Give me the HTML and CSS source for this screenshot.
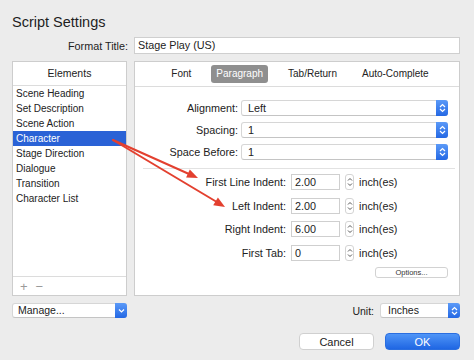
FILE: index.html
```html
<!DOCTYPE html>
<html lang="en">
<head>
    <meta charset="UTF-8">
    <meta name="viewport" content="width=device-width, initial-scale=1.0">
    <title>Script Settings</title>
    <link rel="stylesheet" href="styles.css">
</head>
<body>

    <div class="window">
        <div class="title">Script Settings</div>

        <div class="format-row">
            <label class="format-label">Format Title:</label>
            <div class="text-field wide">Stage Play (US)</div>
        </div>

        <div class="main">
            <div class="elements">
                <div class="elements-header">Elements</div>
                <div class="item">Scene Heading</div>
                <div class="item">Set Description</div>
                <div class="item">Scene Action</div>
                <div class="item selected">Character</div>
                <div class="item">Stage Direction</div>
                <div class="item">Dialogue</div>
                <div class="item">Transition</div>
                <div class="item">Character List</div>
                <div class="spacer"></div>
                <div class="elements-footer">
                    <span class="plus">+</span>
                    <span class="minus">&minus;</span>
                </div>
            </div>

            <div class="panel">
                <div class="tabbar">
                    <span class="tab">Font</span>
                    <span class="tab active">Paragraph</span>
                    <span class="tab">Tab/Return</span>
                    <span class="tab">Auto-Complete</span>
                </div>

                <div class="popup-rows">
                    <label class="row-label">Alignment:</label>
                    <div class="popup"><span>Left</span><span class="popup-btn"><svg width="7" height="10" viewBox="0 0 7 10"><path d="M1 4 L3.5 1.5 L6 4 M1 6 L3.5 8.5 L6 6" fill="none" stroke="#fff" stroke-width="1.2"/></svg></span></div>
                    <label class="row-label">Spacing:</label>
                    <div class="popup"><span>1</span><span class="popup-btn"><svg width="7" height="10" viewBox="0 0 7 10"><path d="M1 4 L3.5 1.5 L6 4 M1 6 L3.5 8.5 L6 6" fill="none" stroke="#fff" stroke-width="1.2"/></svg></span></div>
                    <label class="row-label">Space Before:</label>
                    <div class="popup"><span>1</span><span class="popup-btn"><svg width="7" height="10" viewBox="0 0 7 10"><path d="M1 4 L3.5 1.5 L6 4 M1 6 L3.5 8.5 L6 6" fill="none" stroke="#fff" stroke-width="1.2"/></svg></span></div>
                </div>

                <div class="separator"></div>

                <div class="indent-rows">
                    <label class="row-label">First Line Indent:</label>
                    <div class="text-field num">2.00</div>
                    <span class="stepper"><svg width="6" height="12" viewBox="0 0 6 12"><path d="M1 4.5 L3 2.5 L5 4.5 M1 7.5 L3 9.5 L5 7.5" fill="none" stroke="#555" stroke-width="1"/></svg></span>
                    <span class="unit-text">inch(es)</span>

                    <label class="row-label">Left Indent:</label>
                    <div class="text-field num">2.00</div>
                    <span class="stepper"><svg width="6" height="12" viewBox="0 0 6 12"><path d="M1 4.5 L3 2.5 L5 4.5 M1 7.5 L3 9.5 L5 7.5" fill="none" stroke="#555" stroke-width="1"/></svg></span>
                    <span class="unit-text">inch(es)</span>

                    <label class="row-label">Right Indent:</label>
                    <div class="text-field num">6.00</div>
                    <span class="stepper"><svg width="6" height="12" viewBox="0 0 6 12"><path d="M1 4.5 L3 2.5 L5 4.5 M1 7.5 L3 9.5 L5 7.5" fill="none" stroke="#555" stroke-width="1"/></svg></span>
                    <span class="unit-text">inch(es)</span>

                    <label class="row-label">First Tab:</label>
                    <div class="text-field num">0</div>
                    <span class="stepper"><svg width="6" height="12" viewBox="0 0 6 12"><path d="M1 4.5 L3 2.5 L5 4.5 M1 7.5 L3 9.5 L5 7.5" fill="none" stroke="#555" stroke-width="1"/></svg></span>
                    <span class="unit-text">inch(es)</span>
                </div>

                <div class="options-row">
                    <button class="options-button">Options...</button>
                </div>
            </div>
        </div>

        <div class="bottom-row">
            <div class="popup manage"><span>Manage...</span><span class="popup-btn"><svg width="7" height="6" viewBox="0 0 7 6"><path d="M1 1.5 L3.5 4 L6 1.5" fill="none" stroke="#fff" stroke-width="1.2"/></svg></span></div>
            <div class="unit-group">
                <label class="unit-label">Unit:</label>
                <div class="popup unit"><span>Inches</span><span class="popup-btn"><svg width="7" height="10" viewBox="0 0 7 10"><path d="M1 4 L3.5 1.5 L6 4 M1 6 L3.5 8.5 L6 6" fill="none" stroke="#fff" stroke-width="1.2"/></svg></span></div>
            </div>
        </div>

        <div class="buttons">
            <button class="btn cancel">Cancel</button>
            <button class="btn ok">OK</button>
        </div>
    </div>

    <!-- rote Pfeile über dem Dialog -->
    <svg class="arrows" width="474" height="360" viewBox="0 0 474 360">
        <g stroke="#e3402f" stroke-width="2" fill="none" stroke-linecap="round">
            <line x1="113" y1="140" x2="189" y2="174"/>
            <line x1="113" y1="140" x2="216" y2="201.5"/>
        </g>
        <g fill="#e3402f">
            <polygon points="198,178 186.1,177.6 189.8,169.4"/>
            <polygon points="225,207 213.2,205.2 217.9,197.5"/>
        </g>
    </svg>

</body>
</html>
```

FILE: styles.css
```css
/* Allgemeine Stile */
body {
    margin: 0;
    width: 474px;
    height: 360px;
    background-color: #ececec;
    font-family: "Liberation Sans", Arial, sans-serif;
    color: #222;
    position: relative;
    overflow: hidden;
}

.window {
    padding: 0 14px 0 12px;
}

.title {
    height: 37px;
    box-sizing: border-box;
    padding-top: 13px;
    font-size: 14.5px;
    line-height: 18px;
    color: #1e1e1e;
}

/* Format Title */
.format-row {
    display: flex;
    align-items: center;
    height: 17px;
}

.format-label {
    width: 122px;
    padding-right: 6px;
    box-sizing: border-box;
    text-align: right;
    font-size: 10.8px;
}

.text-field {
    box-sizing: border-box;
    height: 17px;
    background-color: #fff;
    border: 1px solid #cfcfcf;
    font-size: 10.8px;
    line-height: 15px;
    padding-left: 3px;
}

.text-field.wide {
    flex: 1;
}

/* Hauptbereich */
.main {
    margin-top: 7px;
    display: grid;
    grid-template-columns: 115px 326px;
    gap: 7px;
    height: 235px;
}

.elements {
    display: flex;
    flex-direction: column;
    background-color: #fff;
    border: 1px solid #cdcdcd;
}

.elements-header {
    height: 23px;
    line-height: 23px;
    text-align: center;
    font-size: 10.5px;
    border-bottom: 1px solid #dcdcdc;
}

.item {
    height: 15px;
    line-height: 15px;
    padding-left: 3px;
    font-size: 10px;
}

.item.selected {
    background-color: #2a62d6;
    color: #fff;
}

.spacer {
    flex: 1;
}

.elements-footer {
    height: 18px;
    border-top: 1px solid #dcdcdc;
    display: flex;
    align-items: center;
    gap: 8px;
    padding-left: 7px;
    color: #9a9a9a;
    font-size: 13px;
}

.panel {
    background-color: #fff;
    border: 1px solid #cdcdcd;
    height: 235px;
    box-sizing: border-box;
    display: flex;
    flex-direction: column;
}

.tabbar {
    height: 24px;
    border-bottom: 1px solid #dcdcdc;
    display: flex;
    justify-content: center;
    align-items: center;
    gap: 15px;
    padding-left: 6px;
    font-size: 10px;
}

.tab {
    padding: 0 5px;
    height: 18px;
    line-height: 18px;
}

.tab.active {
    background-color: #8f8f8f;
    color: #fff;
    border-radius: 3px;
}

.popup-rows {
    margin-top: 13px;
    display: grid;
    grid-template-columns: 103px 207px;
    column-gap: 3px;
    row-gap: 6px;
    align-items: center;
}

.row-label {
    text-align: right;
    font-size: 10.8px;
}

.popup {
    box-sizing: border-box;
    height: 16px;
    display: flex;
    align-items: stretch;
    justify-content: space-between;
    background-color: #fff;
    border: 1px solid #d6d6d6;
    border-bottom-color: #c4c4c4;
    border-radius: 3px;
    font-size: 10.8px;
    line-height: 14px;
    padding-left: 6px;
}

.popup-btn {
    width: 12px;
    margin: -1px -1px -1px 0;
    background: linear-gradient(#5b9af8, #2468e4);
    border-radius: 0 3px 3px 0;
    display: flex;
    align-items: center;
    justify-content: center;
}

.separator {
    margin: 8px 4px 0 8px;
    border-top: 1px solid #e2e2e2;
}

.indent-rows {
    margin-top: 5px;
    display: grid;
    grid-template-columns: 151px 49px 8px auto;
    column-gap: 5px;
    row-gap: 7.5px;
    align-items: center;
}

.text-field.num {
    height: 16px;
    line-height: 14px;
    font-size: 10.8px;
}

.stepper {
    box-sizing: border-box;
    width: 9px;
    height: 16px;
    border: 1px solid #d4d4d4;
    border-radius: 3px;
    display: flex;
    align-items: center;
    justify-content: center;
    background-color: #fff;
}

.unit-text {
    font-size: 10.8px;
    padding-left: 1px;
}

.options-row {
    display: flex;
    justify-content: flex-end;
    padding-right: 11px;
    margin-top: 6px;
}

.options-button {
    width: 73px;
    height: 11px;
    padding: 0;
    border: 1px solid #d2d2d2;
    border-radius: 3px;
    background-color: #fff;
    font-family: inherit;
    font-size: 7.5px;
    line-height: 9px;
    color: #333;
}

/* Untere Zeile */
.bottom-row {
    margin-top: 7px;
    height: 15px;
    display: flex;
    justify-content: space-between;
    align-items: center;
}

.popup.manage {
    width: 115px;
    height: 15px;
    padding-left: 5px;
    font-size: 10.5px;
    line-height: 13px;
}

.unit-group {
    display: flex;
    align-items: center;
    gap: 6px;
}

.unit-label {
    font-size: 10.5px;
}

.popup.unit {
    width: 80px;
    height: 15px;
    padding-left: 7px;
    font-size: 10.5px;
    line-height: 13px;
}

.buttons {
    margin-top: 15px;
    display: flex;
    justify-content: flex-end;
    gap: 11px;
}

.btn {
    width: 75px;
    height: 17px;
    padding: 0;
    border-radius: 4px;
    font-family: inherit;
    font-size: 11px;
}

.btn.cancel {
    background-color: #fff;
    border: 1px solid #d0d0d0;
    color: #222;
}

.btn.ok {
    background: linear-gradient(#4f95f7, #1f66e3);
    border: 1px solid #2a6ee0;
    color: #fff;
}

.arrows {
    position: absolute;
    left: 0;
    top: 0;
    pointer-events: none;
}
```
